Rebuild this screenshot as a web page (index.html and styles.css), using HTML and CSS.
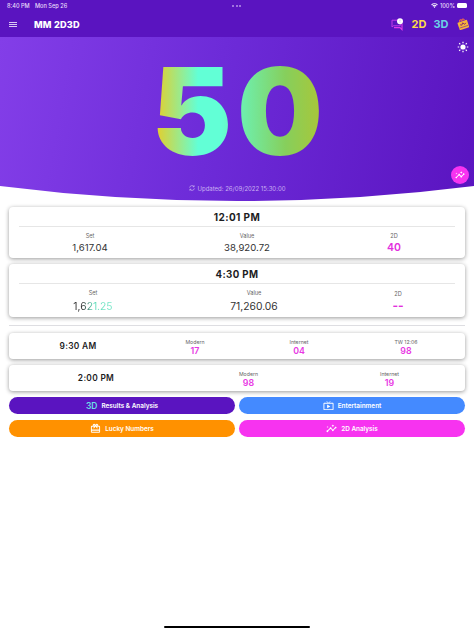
FILE: index.html
```html
<!DOCTYPE html>
<html lang="en">
<head>
    <meta charset="UTF-8">
    <meta name="viewport" content="width=device-width, initial-scale=1.0">
    <title>MM 2D3D</title>
    <link rel="stylesheet" href="styles.css">
</head>
<body>
    <svg width="0" height="0" class="defs">
        <symbol id="insights" viewBox="0 0 24 24">
            <path d="M21 8c-1.45 0-2.26 1.44-1.93 2.51l-3.55 3.56c-.3-.09-.74-.09-1.04 0l-2.55-2.55C12.27 10.45 11.46 9 10 9c-1.45 0-2.27 1.44-1.93 2.52l-4.56 4.55C2.44 15.74 1 16.55 1 18c0 1.1.9 2 2 2 1.45 0 2.26-1.44 1.93-2.51l4.55-4.56c.3.09.74.09 1.04 0l2.55 2.55C12.73 16.55 13.54 18 15 18c1.45 0 2.27-1.44 1.93-2.52l3.56-3.55C21.56 12.26 23 11.45 23 10c0-1.1-.9-2-2-2z"/>
            <path d="M15 9l.94-2.07L18 6l-2.06-.93L15 3l-.92 2.07L12 6l2.08.93zM3.5 11L4 9l2-.5L4 8l-.5-2L3 8l-2 .5L3 9z"/>
        </symbol>
    </svg>

    <div class="topbar">
        <div class="status-bar">
            <span class="clock">8:40 PM</span>
            <span class="date">Mon Sep 26</span>
            <span class="dots"><i></i><i></i><i></i></span>
            <svg class="wifi" viewBox="0 0 16 12"><path d="M0 3.7a11.5 11.5 0 0 1 16 0L14.3 5.4a9 9 0 0 0-12.6 0zM2.8 6.5a7.5 7.5 0 0 1 10.4 0L11.5 8.2a5 5 0 0 0-7 0zM5.6 9.2a3.5 3.5 0 0 1 4.8 0L8 11.7z"/></svg>
            <span class="percent">100%</span>
            <span class="battery"></span>
        </div>
        <div class="app-bar">
            <span class="menu"><i></i><i></i><i></i></span>
            <h1>MM 2D3D</h1>
            <svg class="chat" viewBox="0 0 12 13">
                <path d="M1 2.2h8.2v5.6H2.3L1 9z" fill="none" stroke="#c43be8" stroke-width="1"/>
                <path d="M3 9.6h6l2 2V5.5" fill="none" stroke="#e23bea" stroke-width="1.1"/>
                <circle cx="9" cy="3.2" r="3" fill="#fff"/>
                <path d="M9 1.7v1.8M9 4.1v.7" stroke="#b9a0e8" stroke-width=".6"/>
            </svg>
            <span class="link-2d">2D</span>
            <span class="link-3d">3D</span>
            <svg class="ticket" viewBox="0 0 12 12">
                <g transform="rotate(-18 6 6)">
                    <rect x="1" y="3" width="10" height="8" rx="1" fill="#f6b53c"/>
                    <path d="M1.5 8.9h9" stroke="#8a3a8c" stroke-width=".7"/>
                    <path d="M3 5.8l1.5 1L6 4.8l1.5 2 1.5-1" fill="none" stroke="#8a2f6c" stroke-width=".9"/>
                    <path d="M3.5 2.9C3.5.7 6 .7 6 2.9 6 .7 8.5.7 8.5 2.9" fill="none" stroke="#f06a4a" stroke-width="1.1"/>
                </g>
            </svg>
        </div>
    </div>

    <div class="hero-wrap">
        <div class="hero">
            <div class="number">50</div>
            <div class="updated">
                <svg viewBox="0 0 12 12"><path d="M1.2 5.2A4.9 4.9 0 0 1 10 3.3M10.8 6.8A4.9 4.9 0 0 1 2 8.7M10.3.8v2.8H7.5M1.7 11.2V8.4h2.8" fill="none" stroke="currentColor" stroke-width="1.5"/></svg>
                <span>Updated: 26/09/2022 15:30:00</span>
            </div>
        </div>
        <svg class="sun" viewBox="0 0 12 12">
            <circle cx="6" cy="6" r="2.6" fill="#fff"/>
            <path d="M6 .7v1.5M6 9.8v1.5M.7 6h1.5M9.8 6h1.5M2.2 2.2l1.1 1.1M8.7 8.7l1.1 1.1M2.2 9.8l1.1-1.1M8.7 3.3l1.1-1.1" stroke="#fff" stroke-width="1.2"/>
        </svg>
        <div class="fab"><svg><use href="#insights"/></svg></div>
    </div>

    <div class="content">
        <div class="card result noon">
            <h2>12:01 PM</h2>
            <div class="cols">
                <div><label>Set</label><b>1,617.04</b></div>
                <div><label>Value</label><b>38,920.72</b></div>
                <div><label>2D</label><b class="pink">40</b></div>
            </div>
        </div>
        <div class="card result evening">
            <h2>4:30 PM</h2>
            <div class="cols">
                <div><label>Set</label><b class="shimmer">1,621.25</b></div>
                <div><label>Value</label><b>71,260.06</b></div>
                <div class="pending"><label>2D</label><b class="pink">--</b></div>
            </div>
        </div>

        <hr>

        <div class="card extra morning">
            <h3>9:30 AM</h3>
            <div><label>Modern</label><b>17</b></div>
            <div><label>Internet</label><b>04</b></div>
            <div><label>TW 12:06</label><b>98</b></div>
        </div>
        <div class="card extra afternoon">
            <h3>2:00 PM</h3>
            <div><label>Modern</label><b>98</b></div>
            <div><label>Internet</label><b>19</b></div>
        </div>

        <div class="buttons">
            <button class="purple"><span class="tag">3D</span>Results &amp; Analysis</button>
            <button class="blue">
                <svg viewBox="0 0 24 24"><path d="M21 6h-7.6l3.3-3.3-.7-.7-4 4-4-4-.7.7L10.6 6H3c-1.1 0-2 .9-2 2v12c0 1.1.9 2 2 2h18c1.1 0 2-.9 2-2V8c0-1.1-.9-2-2-2zm0 14H3V8h18v12zM9 10v8l7-4z"/></svg>
                Entertainment
            </button>
            <button class="orange">
                <svg viewBox="0 0 24 24"><path fill-rule="evenodd" d="M20 6h-2.2A3 3 0 0 0 12.5 3.3L12 4l-.5-.7A3 3 0 0 0 6.2 6H4a2 2 0 0 0-2 2v11a2 2 0 0 0 2 2h16a2 2 0 0 0 2-2V8a2 2 0 0 0-2-2zM15 4a1 1 0 1 1 0 2 1 1 0 0 1 0-2zM9 4a1 1 0 1 1 0 2 1 1 0 0 1 0-2zM4 17h16v2H4zM4 8h5L7 10.8 8.6 12 12 7.4 15.4 12 17 10.8 15 8h5v6H4z"/></svg>
                Lucky Numbers
            </button>
            <button class="pink-bg"><svg><use href="#insights"/></svg>2D Analysis</button>
        </div>
    </div>

    <div class="home-bar"></div>
</body>
</html>
```
FILE: styles.css
```css
* {
    box-sizing: border-box;
}
body {
    margin: 0;
    height: 632px;
    display: flex;
    flex-direction: column;
    overflow: hidden;
    background: #fff;
    font-family: Inter, "Liberation Sans", sans-serif;
    color: #1c1c1e;
}
h1, h2, h3 {
    margin: 0;
}
.defs {
    position: absolute;
}
.topbar {
    height: 37px;
    background: #5a14c0;
    color: #fff;
}
.status-bar {
    position: relative;
    display: flex;
    align-items: center;
    height: 11px;
    padding: 0 7px 0 7px;
    font-size: 5.6px;
    font-weight: 500;
    color: #e9defa;
}
.clock {
    width: 28px;
}
.dots {
    position: absolute;
    left: 232px;
    top: 5px;
    display: flex;
    gap: 1.5px;
}
.dots i {
    width: 2px;
    height: 2px;
    border-radius: 50%;
    background: #b793ea;
}
.wifi {
    width: 7px;
    height: 5px;
    margin-left: auto;
    fill: #fff;
}
.percent {
    margin: 0 2px;
}
.battery {
    width: 10px;
    height: 5px;
    border-radius: 1.5px;
    background: #fff;
}
.app-bar {
    display: flex;
    align-items: center;
    height: 26px;
    padding: 0 5px 0 9px;
}
.menu {
    width: 25px;
}
.menu i {
    display: block;
    width: 8px;
    height: 1px;
    margin: 1px 0;
    background: #d9c8f3;
}
h1 {
    font-size: 9.2px;
    font-weight: 800;
    letter-spacing: 0.2px;
}
.chat {
    width: 12px;
    height: 13px;
    margin-left: auto;
}
.link-2d, .link-3d {
    font-size: 11px;
    font-weight: 700;
    color: #fbdc47;
    margin-left: 9px;
}
.link-3d {
    color: #6bcfe6;
    margin-left: 7px;
}
.ticket {
    width: 12px;
    height: 12px;
    margin-left: 8.5px;
}
.hero-wrap {
    position: relative;
    height: 164px;
}
.hero {
    height: 164px;
    background: linear-gradient(100deg, #833ee8 0%, #6d2bd8 45%, #5a14c0 100%);
    clip-path: path("M0 0H474V149Q237 179 0 149Z");
}
.number {
    width: 171px;
    margin: 0 auto;
    height: 147px;
    line-height: 148px;
    font-size: 121px;
    font-weight: 900;
    letter-spacing: 5px;
    white-space: nowrap;
    background: linear-gradient(90deg, #e2cf2f 3%, #62ffd6 27%, #62ffd6 40%, #86cf5c 78%, #a6c73c 97%);
    -webkit-background-clip: text;
    background-clip: text;
    color: transparent;
}
.updated {
    display: flex;
    justify-content: center;
    align-items: center;
    gap: 3px;
    height: 8px;
    font-size: 6px;
    color: #c9aff2;
}
.updated svg {
    width: 6px;
    height: 6px;
}
.sun {
    position: absolute;
    top: 4px;
    right: 5px;
    width: 12px;
    height: 12px;
}
.fab {
    position: absolute;
    top: 129px;
    right: 5px;
    width: 18px;
    height: 18px;
    display: flex;
    align-items: center;
    justify-content: center;
    border-radius: 50%;
    background: #f733f0;
}
.fab svg {
    width: 10px;
    height: 10px;
    fill: #fff;
}
.content {
    padding: 6px 9px 0;
}
.card {
    background: #fff;
    border-radius: 4px;
    box-shadow: 0 1px 4px rgba(0, 0, 0, 0.4);
}
label, b {
    display: block;
    text-align: center;
    white-space: nowrap;
}
label {
    font-size: 5.6px;
    line-height: 8px;
    color: #666;
}
.result {
    height: 51px;
    padding: 0 10px;
    margin-bottom: 6px;
}
.result h2 {
    height: 20px;
    line-height: 21px;
    border-bottom: 1px solid #e6e6e6;
    text-align: center;
    font-size: 10px;
    font-weight: 700;
    letter-spacing: 0.4px;
}
.cols {
    display: grid;
    padding-top: 5px;
}
.noon .cols {
    grid-template-columns: 142px 172px 122px;
}
.evening .cols {
    grid-template-columns: 148px 174px 114px;
}
.result b {
    font-size: 9.6px;
    line-height: 15px;
    font-weight: 400;
    color: #333;
}
.result.evening {
    height: 53px;
    margin-bottom: 8px;
}
.result.evening h2 {
    font-size: 9.7px;
}
.evening b {
    line-height: 18px;
}
.evening .cols b {
    font-size: 10.3px;
}
.result .pink {
    color: #e32fdd;
    font-weight: 600;
    font-size: 10.5px;
}
.pending {
    padding-top: 1px;
}
.evening .pending .pink {
    font-size: 12px;
    font-weight: 700;
    line-height: 15px;
}
.evening .shimmer {
    width: max-content;
    margin: 0 auto;
    background: linear-gradient(90deg, #333 25%, #5ddcb9 50%, #7ce8ca 100%);
    -webkit-background-clip: text;
    background-clip: text;
    color: transparent;
}
hr {
    height: 1px;
    margin: 0 0 7px;
    border: 0;
    background: #dedee2;
}
.extra {
    display: grid;
    align-items: center;
    height: 26px;
    margin-bottom: 6px;
}
.morning {
    grid-template-columns: 138px 96px 112px 102px;
}
.afternoon {
    grid-template-columns: 174px 131px 151px;
}
.extra h3 {
    text-align: center;
    font-size: 8.4px;
    font-weight: 600;
    letter-spacing: 0.3px;
}
.extra label {
    font-size: 5.2px;
}
.extra b {
    font-size: 8.8px;
    line-height: 9px;
    font-weight: 600;
    color: #e838e4;
}
.buttons {
    display: grid;
    grid-template-columns: 1fr 1fr;
    gap: 6px 4px;
}
button {
    display: flex;
    align-items: center;
    justify-content: center;
    gap: 4px;
    height: 17px;
    padding: 0;
    border: 0;
    border-radius: 9px;
    font-family: inherit;
    font-size: 6.4px;
    font-weight: 600;
    color: #fff;
}
button svg {
    width: 11px;
    height: 11px;
    fill: #fff;
}
.tag {
    font-size: 8.5px;
    color: #6bdfe6;
}
.purple {
    background: #5a14c0;
}
.blue {
    background: #448aff;
}
.orange {
    background: #ff9100;
}
.pink-bg {
    background: #f733f0;
}
.home-bar {
    width: 146px;
    height: 2px;
    margin: auto auto 4px;
    border-radius: 1px;
    background: #000;
}
```
